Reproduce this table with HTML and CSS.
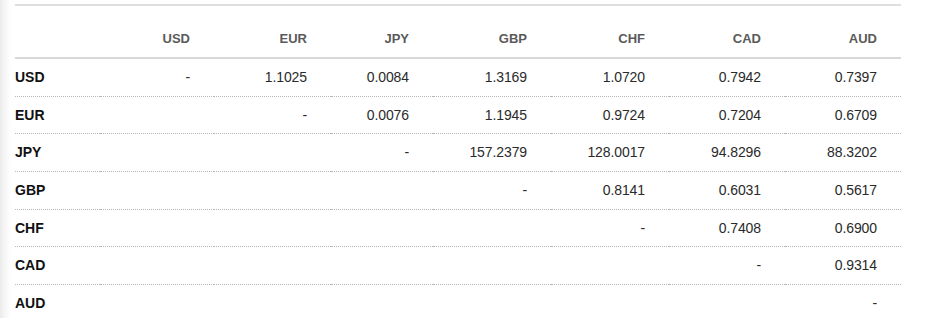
FILE: index.html
```html
<!DOCTYPE html>
<html lang="en">
<head>
<meta charset="utf-8">
<title>Cross rates</title>
<link rel="stylesheet" href="styles.css">
</head>
<body>
<div class="page">
<table class="rates">
  <colgroup>
    <col class="c-label"><col class="c-usd"><col class="c-eur"><col class="c-jpy"><col class="c-gbp"><col class="c-chf"><col class="c-cad"><col class="c-aud">
  </colgroup>
  <thead>
    <tr><th class="corner"></th><th>USD</th><th>EUR</th><th>JPY</th><th>GBP</th><th>CHF</th><th>CAD</th><th>AUD</th></tr>
  </thead>
  <tbody>
    <tr><th class="label">USD</th><td>-</td><td>1.1025</td><td>0.0084</td><td>1.3169</td><td>1.0720</td><td>0.7942</td><td>0.7397</td></tr>
    <tr><th class="label">EUR</th><td></td><td>-</td><td>0.0076</td><td>1.1945</td><td>0.9724</td><td>0.7204</td><td>0.6709</td></tr>
    <tr><th class="label">JPY</th><td></td><td></td><td>-</td><td>157.2379</td><td>128.0017</td><td>94.8296</td><td>88.3202</td></tr>
    <tr><th class="label">GBP</th><td></td><td></td><td></td><td>-</td><td>0.8141</td><td>0.6031</td><td>0.5617</td></tr>
    <tr><th class="label">CHF</th><td></td><td></td><td></td><td></td><td>-</td><td>0.7408</td><td>0.6900</td></tr>
    <tr><th class="label">CAD</th><td></td><td></td><td></td><td></td><td></td><td>-</td><td>0.9314</td></tr>
    <tr><th class="label">AUD</th><td></td><td></td><td></td><td></td><td></td><td></td><td>-</td></tr>
  </tbody>
</table>
</div>
</body>
</html>
```

FILE: styles.css
```css
html, body {
  margin: 0;
  padding: 0;
  background: #fff;
}
body {
  width: 930px;
  height: 318px;
  overflow: hidden;
  font-family: "Liberation Sans", Arial, sans-serif;
  background: linear-gradient(to right, #ebebeb 0, #f6f6f6 5px, #ffffff 11px) no-repeat;
}
.page {
  padding: 4px 0 0 15px;
}
.rates {
  border-collapse: collapse;
  table-layout: fixed;
  width: 886px;
  border-top: 2px solid #dedede;
}
.c-label { width: 85px; }
.c-usd { width: 114px; }
.c-eur { width: 117px; }
.c-jpy { width: 102px; }
.c-gbp { width: 118px; }
.c-chf { width: 118px; }
.c-cad { width: 116px; }
.c-aud { width: 116px; }

.rates thead th {
  height: 40px;
  padding: 0 24px 11px 0;
  vertical-align: bottom;
  text-align: right;
  font-size: 13px;
  line-height: 15px;
  font-weight: bold;
  color: #5a5a5a;
  border-bottom: 2px solid #d8d8d8;
}
.rates tbody tr {
  border-bottom: 1px dotted #b5b5b5;
}
.rates tbody tr:last-child {
  border-bottom: none;
}
.rates tbody td,
.rates tbody th {
  height: 35.7px;
  padding: 0 24px 1px 0;
  vertical-align: middle;
  font-size: 14px;
  line-height: 16px;
}
.rates tbody td {
  text-align: right;
  color: #2a2a2a;
  letter-spacing: -0.1px;
}
.rates tbody th.label {
  text-align: left;
  padding-left: 0;
  font-weight: bold;
  color: #111;
}
```
